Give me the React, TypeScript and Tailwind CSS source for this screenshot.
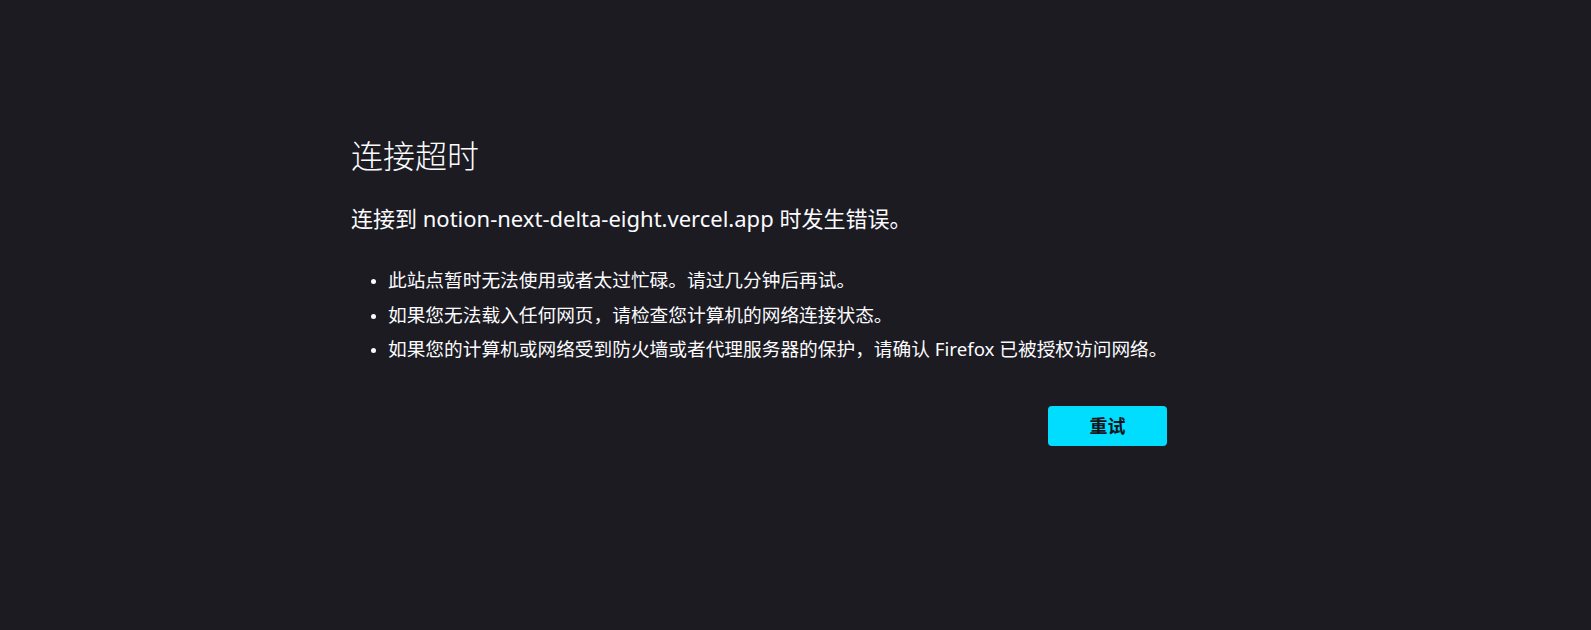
export default function App() {
  const items = [
    '此站点暂时无法使用或者太过忙碌。请过几分钟后再试。',
    '如果您无法载入任何网页，请检查您计算机的网络连接状态。',
    '如果您的计算机或网络受到防火墙或者代理服务器的保护，请确认 Firefox 已被授权访问网络。',
  ];

  return (
    <div
      className="min-h-[630px] bg-[#1c1b22] text-[#fbfbfe]"
      style={{ fontFamily: '"Noto Sans", "Noto Sans CJK SC", sans-serif' }}
    >
      <div className="ml-[351px] w-[816px] pt-[128px]">
        <h1 className="text-[32px] font-light leading-[56px]">连接超时</h1>
        <p className="mt-[20px] text-[22px] leading-[28px]">
          连接到 notion-next-delta-eight.vercel.app 时发生错误。
        </p>
        <ul className="mt-[36px] list-disc pl-[37px] text-[18.7px] leading-[24px] marker:text-[14px]">
          {items.map((item) => (
            <li key={item} className="mb-[10.5px] whitespace-nowrap">
              {item}
            </li>
          ))}
        </ul>
        <div className="mt-[45px] flex justify-end">
          <button className="h-[40px] w-[119px] rounded-[4px] bg-[#00ddff] text-[18px] font-bold text-[#15141a]">
            重试
          </button>
        </div>
      </div>
    </div>
  );
}
